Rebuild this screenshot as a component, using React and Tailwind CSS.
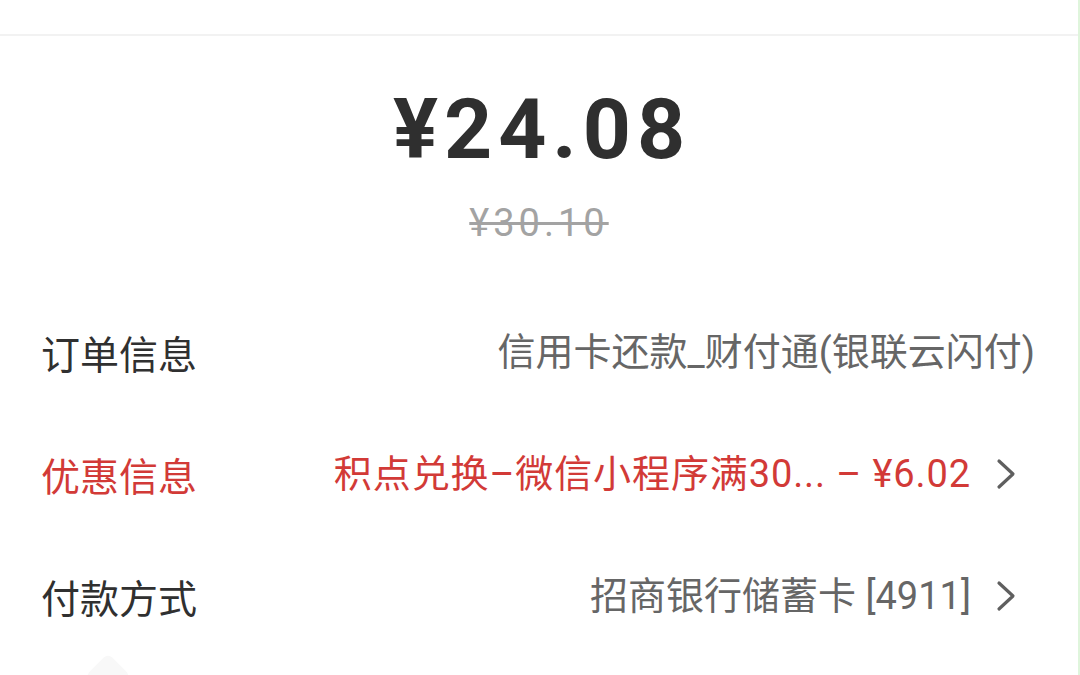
import React from "react";

const cjk = { fontFamily: '"Noto Sans CJK SC", "Noto Sans", sans-serif' };
const num = { fontFamily: 'Roboto, "Noto Sans CJK SC", sans-serif' };

function Chevron() {
  return (
    <svg width="22" height="32" viewBox="0 0 22 32" className="ml-[24px] mr-[18px] shrink-0">
      <path d="M4 3 L18 16 L4 29" fill="none" stroke="#5f5f5f" strokeWidth="3.2" strokeLinecap="round" strokeLinejoin="round" />
    </svg>
  );
}

function Row({ label, value, red, arrow }) {
  return (
    <div className="flex items-center justify-between h-[122px] pl-[41px] pr-[43px]">
      <span className={"text-[39px] " + (red ? "text-[#d23a37]" : "text-[#303030]")}>{label}</span>
      <div className="flex items-center">
        <span
          className={"text-[38px] " + (red ? "text-[#d23a37] tracking-[0.9px]" : "text-[#666666]")}
          style={num}
        >
          {value}
        </span>
        {arrow && <Chevron />}
      </div>
    </div>
  );
}

export default function App() {
  return (
    <div className="w-[1080px] h-[675px] overflow-hidden bg-white border-r-2 border-[#dff5dc] relative" style={cjk}>
      <div className="h-[36px] border-b-2 border-[#f2f2f2]"></div>

      <div className="flex flex-col items-center pt-[52px]">
        <div className="text-[84px] leading-none font-bold text-[#2f2f2f] tracking-[6px] pl-[6px]" style={num}>
          ¥24.08
        </div>
        <div className="mt-[32px] text-[38px] leading-none text-[#a3a3a3] line-through tracking-[4px]" style={num}>
          ¥30.10
        </div>
      </div>

      <div className="mt-[49px]">
        <Row label="订单信息" value="信用卡还款_财付通(银联云闪付)" />
        <Row label="优惠信息" value="积点兑换–微信小程序满30... – ¥6.02" red arrow />
        <Row label="付款方式" value="招商银行储蓄卡 [4911]" arrow />
      </div>

      <div className="absolute left-[92px] top-[660px] w-[32px] h-[32px] rotate-45 bg-[#f8f8f8] rounded-[6px]"></div>
    </div>
  );
}
